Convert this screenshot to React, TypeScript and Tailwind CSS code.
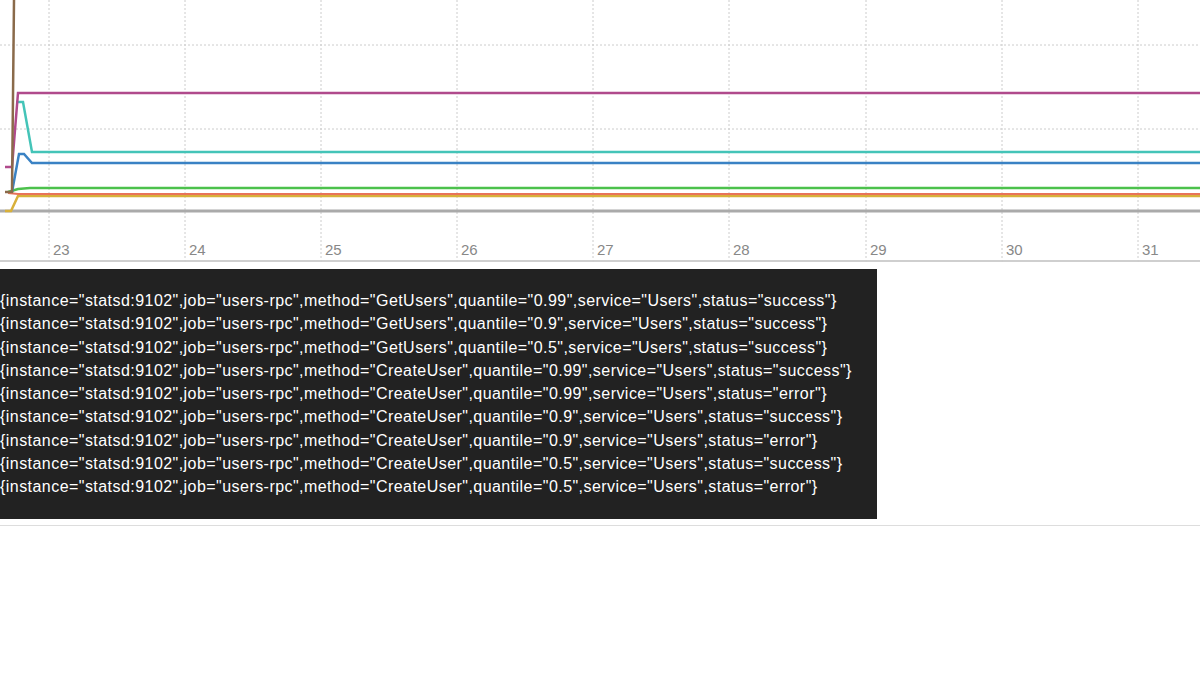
export default function App() {
  const xs = [49, 185, 321, 457, 593, 729, 866, 1002, 1138];
  const labels = ["23", "24", "25", "26", "27", "28", "29", "30", "31"];
  const rows = [
    ['GetUsers', '0.99', 'success'],
    ['GetUsers', '0.9', 'success'],
    ['GetUsers', '0.5', 'success'],
    ['CreateUser', '0.99', 'success'],
    ['CreateUser', '0.99', 'error'],
    ['CreateUser', '0.9', 'success'],
    ['CreateUser', '0.9', 'error'],
    ['CreateUser', '0.5', 'success'],
    ['CreateUser', '0.5', 'error'],
  ];
  return (
    <div className="w-[1200px] h-[675px] bg-white overflow-hidden" style={{ fontFamily: '"Liberation Sans", Arial, sans-serif' }}>
      <div className="relative h-[262px] border-b-2 border-[#cfcfcf]">
        <svg width="1200" height="262" className="absolute inset-0">
          {xs.map((x) => (
            <line key={x} x1={x} x2={x} y1={0} y2={262} stroke="#ccc" strokeDasharray="2 2" />
          ))}
          {[45, 129].map((y) => (
            <line key={y} x1={0} x2={1200} y1={y} y2={y} stroke="#ccc" strokeDasharray="2 2" />
          ))}
          {labels.map((l, i) => (
            <text key={l} x={xs[i] + 4} y={255} fontSize="15" fill="#888">{l}</text>
          ))}
          <polyline points="0,211 1200,211" fill="none" stroke="#aaa" strokeWidth="3" />
          <polyline points="5,211 11,211 18,196 1200,196" fill="none" stroke="#d8b03a" strokeWidth="2.5" />
          <polyline points="8,193 18,194 1200,194" fill="none" stroke="#e8735a" strokeWidth="2" />
          <polyline points="8,192 18,189 30,188 1200,188" fill="none" stroke="#4cc14c" strokeWidth="2.5" />
          <polyline points="12,192 19,154 24,154 32,163 1200,163" fill="none" stroke="#3a82c4" strokeWidth="2.5" />
          <polyline points="16,102 23,102 32,152 1200,152" fill="none" stroke="#44c4b8" strokeWidth="2.5" />
          <polyline points="5,167 12,167 18,93 1200,93" fill="none" stroke="#b04a8c" strokeWidth="2.5" />
          <polyline points="5,192 12,192 14,0" fill="none" stroke="#8a6a4a" strokeWidth="2.5" />
        </svg>
      </div>
      <div className="mt-[7px] w-[877px] h-[250px] bg-[#222] text-white text-[16px] leading-[23.3px] pt-[20px] tracking-[0.45px]">
        {rows.map(([m, q, s], i) => (
          <div key={i}>{`{instance="statsd:9102",job="users-rpc",method="${m}",quantile="${q}",service="Users",status="${s}"}`}</div>
        ))}
      </div>
      <div className="mt-[6px] border-t border-[#ddd]" />
    </div>
  );
}
